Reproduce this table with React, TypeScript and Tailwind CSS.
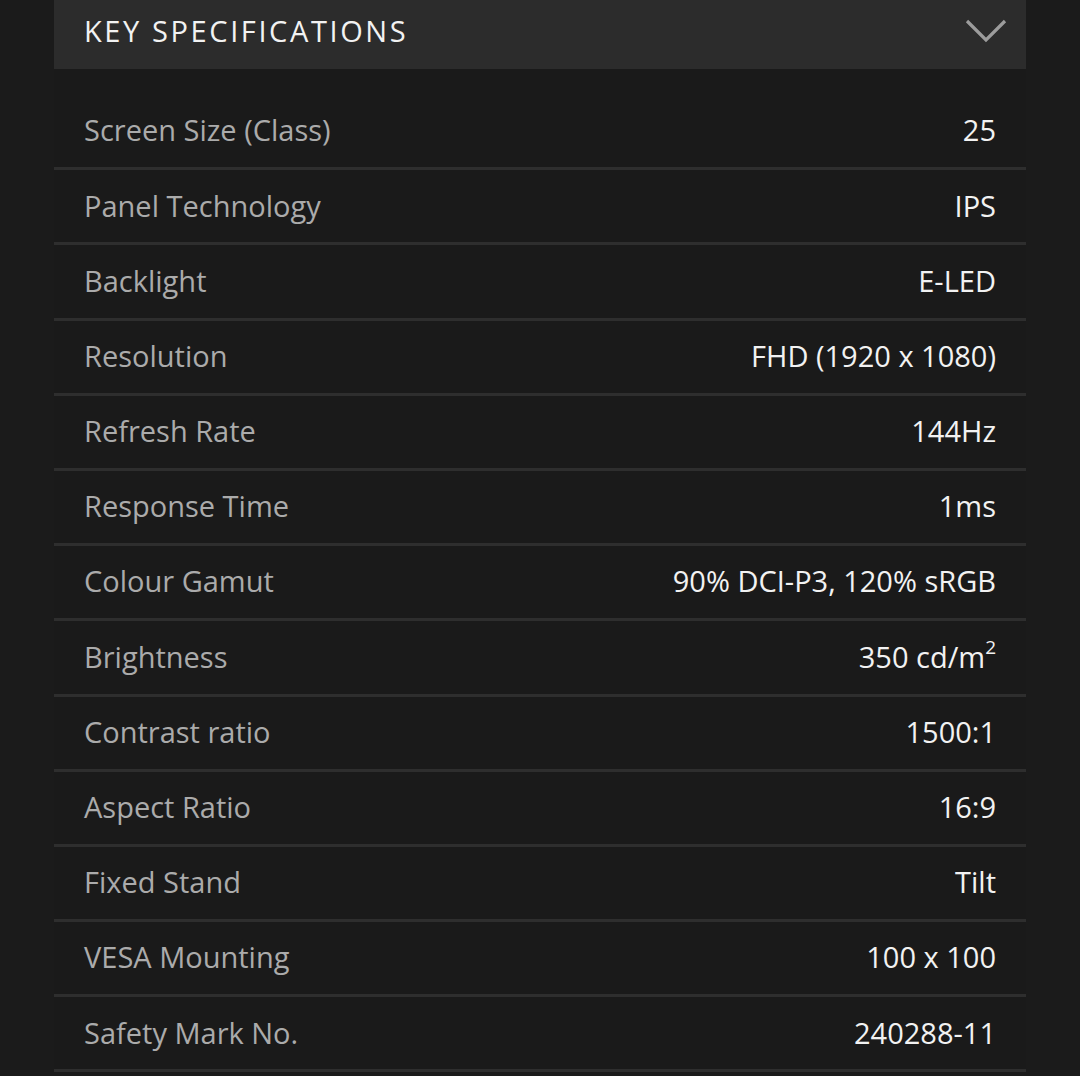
const SPECS: [string, React.ReactNode][] = [
  ['Screen Size (Class)', '25'],
  ['Panel Technology', 'IPS'],
  ['Backlight', 'E-LED'],
  ['Resolution', 'FHD (1920 x 1080)'],
  ['Refresh Rate', '144Hz'],
  ['Response Time', '1ms'],
  ['Colour Gamut', '90% DCI-P3, 120% sRGB'],
  [
    'Brightness',
    <>
      350 cd/m<sup className="relative -top-[3px] align-super text-[19px] leading-none">2</sup>
    </>,
  ],
  ['Contrast ratio', '1500:1'],
  ['Aspect Ratio', '16:9'],
  ['Fixed Stand', 'Tilt'],
  ['VESA Mounting', '100 x 100'],
  ['Safety Mark No.', '240288-11'],
];

export default function App() {
  return (
    <div className="min-h-[1076px] bg-[#1b1b1b] px-[54px] font-['Open_Sans',sans-serif]">
      <div className="flex h-[69px] items-center justify-between bg-[#2c2c2c] pb-[8px] pl-[30px] pr-[19px]">
        <h2 className="text-[29px] font-normal tracking-[2.6px] text-[#f2f2f2]">KEY SPECIFICATIONS</h2>
        <svg width="42" height="26" viewBox="0 0 42 26" fill="none" aria-hidden>
          <path d="M2 3l19 19L40 3" stroke="#9c9c9c" strokeWidth="3.2" />
        </svg>
      </div>

      <div className="bg-[#1a1a1a] pt-[26px]">
        {SPECS.map(([label, value]) => (
          <div
            key={label}
            className="flex h-[75.2px] items-center justify-between border-b-[3px] border-[#2e2e2e] px-[30px] pb-[2px] text-[29px]"
          >
            <span className="text-[#ababab]">{label}</span>
            <span className="text-[#f2f2f2]">{value}</span>
          </div>
        ))}
      </div>
    </div>
  );
}
